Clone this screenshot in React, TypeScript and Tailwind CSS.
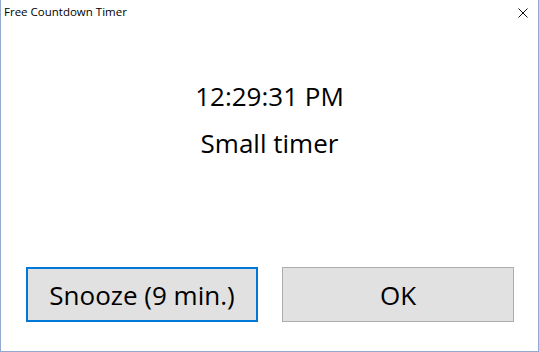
import React from "react";

const App: React.FC = () => {
  return (
    <div className="w-[539px] h-[352px] bg-white border-x border-b border-[#93a8d0] flex flex-col text-black font-['Open_Sans',sans-serif]">
      {/* title bar */}
      <div className="h-[30px] flex items-start justify-between">
        <div className="pl-[3px] pt-[4px] text-[11.5px] leading-[16px]">
          Free Countdown Timer
        </div>
        <div className="pr-[10px] pt-[8px]">
          <svg width="10" height="10" viewBox="0 0 10 10">
            <path d="M0.5 0.5 L9.5 9.5 M9.5 0.5 L0.5 9.5" stroke="#111" strokeWidth="1" />
          </svg>
        </div>
      </div>

      <div className="flex flex-col items-center pt-[43px]">
        <div className="text-[26px] leading-[47px]">12:29:31 PM</div>
        <div className="text-[26px] leading-[47px]">Small timer</div>
      </div>

      <div className="mt-auto flex gap-[24px] pl-[25px] pb-[29px]">
        <button className="w-[232px] h-[55px] bg-[#e1e1e1] border-2 border-[#0078d7] text-[26px] leading-none">
          Snooze (9 min.)
        </button>
        <button className="w-[232px] h-[55px] bg-[#e1e1e1] border border-[#adadad] text-[26px] leading-none">
          OK
        </button>
      </div>
    </div>
  );
};

export default App;
